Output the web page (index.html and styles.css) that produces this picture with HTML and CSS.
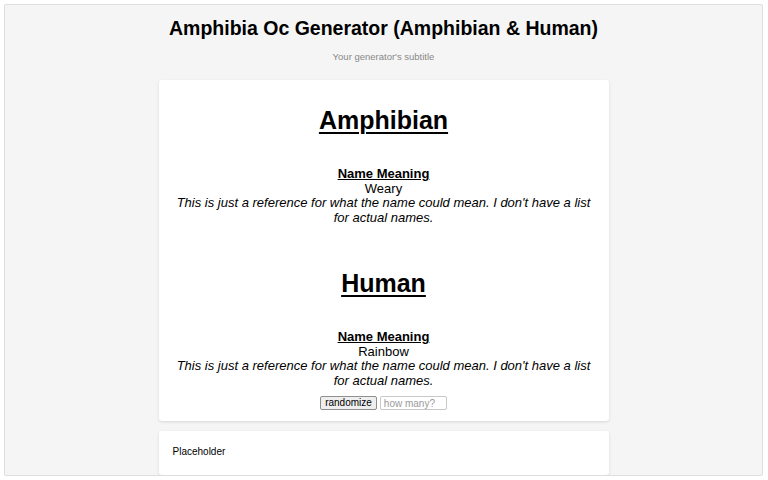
FILE: index.html
```html
<!DOCTYPE html>
<html lang="en">

<head>
    <meta charset="UTF-8">
    <meta name="viewport" content="width=device-width, initial-scale=1.0">
    <title>Amphibia Oc Generator (Amphibian &amp; Human)</title>
    <link rel="stylesheet" href="styles.css">
</head>

<body>
    <div class="page">
        <div class="header">
            <h1 class="title">Amphibia Oc Generator (Amphibian &amp; Human)</h1>
            <p class="subtitle">Your generator's subtitle</p>
        </div>

        <div class="card output">
            <div class="section">
                <h2>Amphibian</h2>
                <p class="meaning">
                    <u><b>Name Meaning</b></u><br>
                    <span id="amphibian-name">Weary</span><br>
                    <i>This is just a reference for what the name could mean. I don't have a list for actual names.</i>
                </p>
            </div>

            <div class="section">
                <h2>Human</h2>
                <p class="meaning">
                    <u><b>Name Meaning</b></u><br>
                    <span id="human-name">Rainbow</span><br>
                    <i>This is just a reference for what the name could mean. I don't have a list for actual names.</i>
                </p>
            </div>

            <div class="controls">
                <button class="button">randomize</button>
                <input class="count" type="text" placeholder="how many?">
            </div>
        </div>

        <div class="card notes">
            Placeholder
        </div>
    </div>
</body>

</html>
```

FILE: styles.css
```css
body {
    margin: 0;
    padding: 4px 5px 0 4px;
    background: #ffffff;
    font-family: 'Liberation Sans', Arial, sans-serif;
    color: #000;
}

.page {
    box-sizing: border-box;
    height: 472px;
    overflow: hidden;
    border: 1px solid #dedede;
    border-radius: 2px;
    background: #f5f5f5;
}

.header {
    padding-top: 12px;
    text-align: center;
}

.title {
    margin: 0;
    font-size: 19.5px;
    line-height: 22px;
    font-weight: bold;
}

.subtitle {
    margin: 12px 0 0;
    font-size: 9.5px;
    line-height: 11px;
    color: #888;
}

.card {
    width: 450px;
    box-sizing: border-box;
    margin: 0 auto;
    background: #fff;
    border-radius: 3px;
    box-shadow: 0 1px 3px rgba(0, 0, 0, 0.12);
}

.output {
    margin-top: 18px;
    padding: 26px 18px 11px;
    text-align: center;
}

.section + .section {
    margin-top: 44px;
}

.section h2 {
    margin: 0 0 32px;
    font-size: 25px;
    line-height: 29px;
    text-decoration: underline;
    text-decoration-thickness: 2px;
    text-underline-offset: 3px;
}

.meaning {
    margin: 0;
    font-size: 13px;
    line-height: 14.5px;
}

.controls {
    display: flex;
    justify-content: center;
    gap: 3px;
    margin-top: 8px;
}

.button {
    height: 14px;
    padding: 0 4px;
    font: 10px 'Liberation Sans', Arial, sans-serif;
    line-height: 12px;
    color: #000;
    background: #efefef;
    border: 1px solid #8f8f8f;
    border-radius: 2px;
}

.count {
    box-sizing: border-box;
    width: 67px;
    height: 14px;
    padding: 0 3px;
    font: 10px 'Liberation Sans', Arial, sans-serif;
    border: 1px solid #c8c8c8;
    border-radius: 2px;
}

.count::placeholder {
    color: #9a9a9a;
}

.notes {
    margin-top: 10px;
    padding: 13px 14px 15px;
    font-size: 10px;
    line-height: 16px;
}
```
